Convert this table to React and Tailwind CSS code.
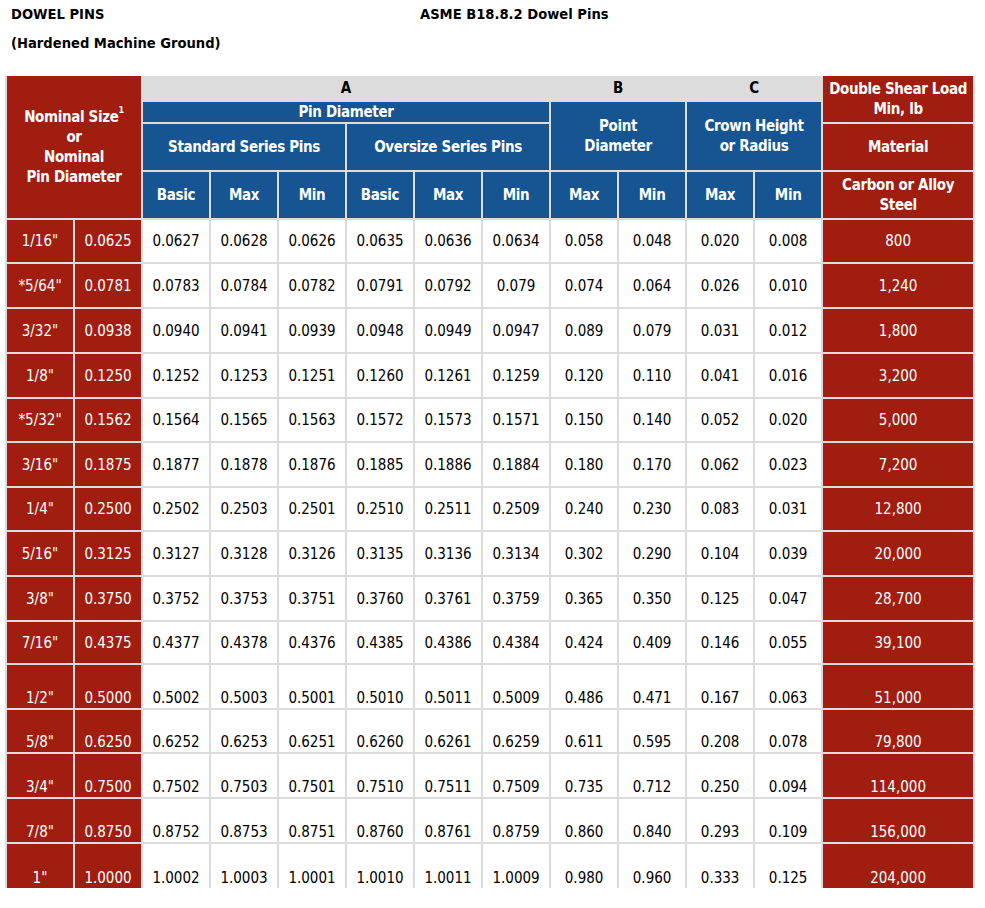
import React from 'react';

const rows = [
  ['1/16"', '0.0625', '0.0627', '0.0628', '0.0626', '0.0635', '0.0636', '0.0634', '0.058', '0.048', '0.020', '0.008', '800'],
  ['*5/64"', '0.0781', '0.0783', '0.0784', '0.0782', '0.0791', '0.0792', '0.079', '0.074', '0.064', '0.026', '0.010', '1,240'],
  ['3/32"', '0.0938', '0.0940', '0.0941', '0.0939', '0.0948', '0.0949', '0.0947', '0.089', '0.079', '0.031', '0.012', '1,800'],
  ['1/8"', '0.1250', '0.1252', '0.1253', '0.1251', '0.1260', '0.1261', '0.1259', '0.120', '0.110', '0.041', '0.016', '3,200'],
  ['*5/32"', '0.1562', '0.1564', '0.1565', '0.1563', '0.1572', '0.1573', '0.1571', '0.150', '0.140', '0.052', '0.020', '5,000'],
  ['3/16"', '0.1875', '0.1877', '0.1878', '0.1876', '0.1885', '0.1886', '0.1884', '0.180', '0.170', '0.062', '0.023', '7,200'],
  ['1/4"', '0.2500', '0.2502', '0.2503', '0.2501', '0.2510', '0.2511', '0.2509', '0.240', '0.230', '0.083', '0.031', '12,800'],
  ['5/16"', '0.3125', '0.3127', '0.3128', '0.3126', '0.3135', '0.3136', '0.3134', '0.302', '0.290', '0.104', '0.039', '20,000'],
  ['3/8"', '0.3750', '0.3752', '0.3753', '0.3751', '0.3760', '0.3761', '0.3759', '0.365', '0.350', '0.125', '0.047', '28,700'],
  ['7/16"', '0.4375', '0.4377', '0.4378', '0.4376', '0.4385', '0.4386', '0.4384', '0.424', '0.409', '0.146', '0.055', '39,100'],
  ['1/2"', '0.5000', '0.5002', '0.5003', '0.5001', '0.5010', '0.5011', '0.5009', '0.486', '0.471', '0.167', '0.063', '51,000'],
  ['5/8"', '0.6250', '0.6252', '0.6253', '0.6251', '0.6260', '0.6261', '0.6259', '0.611', '0.595', '0.208', '0.078', '79,800'],
  ['3/4"', '0.7500', '0.7502', '0.7503', '0.7501', '0.7510', '0.7511', '0.7509', '0.735', '0.712', '0.250', '0.094', '114,000'],
  ['7/8"', '0.8750', '0.8752', '0.8753', '0.8751', '0.8760', '0.8761', '0.8759', '0.860', '0.840', '0.293', '0.109', '156,000'],
  ['1"', '1.0000', '1.0002', '1.0003', '1.0001', '1.0010', '1.0011', '1.0009', '0.980', '0.960', '0.333', '0.125', '204,000'],
];

// row heights alternate a little, like the original page
const heights = [
  'h-[42px]', 'h-[43px]', 'h-[43px]', 'h-[43px]', 'h-[42px]',
  'h-[43px]', 'h-[42px]', 'h-[43px]', 'h-[43px]', 'h-[41px]',
  'h-[43px]', 'h-[42px]', 'h-[43px]', 'h-[43px]', 'h-[44px]',
];

const red = 'bg-[#a11d0f] text-white';
const blue = 'bg-[#165592] text-white font-bold text-[15px] tracking-[-0.35px]';
const redHead = 'bg-[#a11d0f] text-white font-bold text-[15px] tracking-[-0.35px]';
const grayHead = 'bg-[#dcdcdc] font-bold text-[15px]';

export default function App() {
  return (
    <div className="min-h-screen bg-white px-[5px] text-[15px] text-black" style={{ fontFamily: '"DejaVu Sans Condensed", "DejaVu Sans", sans-serif' }}>
      <div className="flex pt-[4px] text-[14.6px] font-bold leading-[20px]">
        <div className="w-[415px] pl-[6px]">DOWEL PINS</div>
        <div>ASME B18.8.2 Dowel Pins</div>
      </div>
      <div className="pl-[6px] pt-[9px] text-[14.6px] font-bold leading-[20px]">(Hardened Machine Ground)</div>

      <div className="mt-[23px] h-[812px] w-[970px] overflow-hidden">
        <table className="-mt-[2px] w-[970px] table-fixed border-separate border-spacing-[2px] bg-[#dcdcdc] text-center leading-[20px]">
          <colgroup>
            {Array.from({ length: 12 }).map((_, i) => (
              <col key={i} className="w-[66px]" />
            ))}
            <col className="w-[150px]" />
          </colgroup>
          <thead>
            <tr className="h-[24px]">
              <th colSpan={2} rowSpan={4} className={redHead}>
                Nominal Size<sup className="text-[9px] align-[5px]">1</sup>
                <br />or<br />Nominal<br />Pin Diameter
              </th>
              <th colSpan={6} className={grayHead}>A</th>
              <th colSpan={2} className={grayHead}>B</th>
              <th colSpan={2} className={grayHead}>C</th>
              <th rowSpan={2} className={redHead}>Double Shear Load<br />Min, lb</th>
            </tr>
            <tr className="h-[20px]">
              <th colSpan={6} className={blue}>Pin Diameter</th>
              <th colSpan={2} rowSpan={2} className={blue}>Point<br />Diameter</th>
              <th colSpan={2} rowSpan={2} className={blue}>Crown Height<br />or Radius</th>
            </tr>
            <tr className="h-[46px]">
              <th colSpan={3} className={blue}>Standard Series Pins</th>
              <th colSpan={3} className={blue}>Oversize Series Pins</th>
              <th className={redHead}>Material</th>
            </tr>
            <tr className="h-[46px]">
              {['Basic', 'Max', 'Min', 'Basic', 'Max', 'Min', 'Max', 'Min', 'Max', 'Min'].map((h, i) => (
                <th key={i} className={blue}>{h}</th>
              ))}
              <th className={redHead}>Carbon or Alloy<br />Steel</th>
            </tr>
          </thead>
          <tbody>
            {rows.map((r, ri) => {
              const low = ri >= 10;
              const cellPos = low ? 'align-bottom pb-0' : 'align-middle';
              return (
                <tr key={ri} className={heights[ri]}>
                  {r.map((v, ci) => {
                    const isRed = ci < 2 || ci === 12;
                    return (
                      <td key={ci} className={`${cellPos} ${isRed ? red : 'bg-white'}`}>
                        {v}
                      </td>
                    );
                  })}
                </tr>
              );
            })}
          </tbody>
        </table>
      </div>
    </div>
  );
}
